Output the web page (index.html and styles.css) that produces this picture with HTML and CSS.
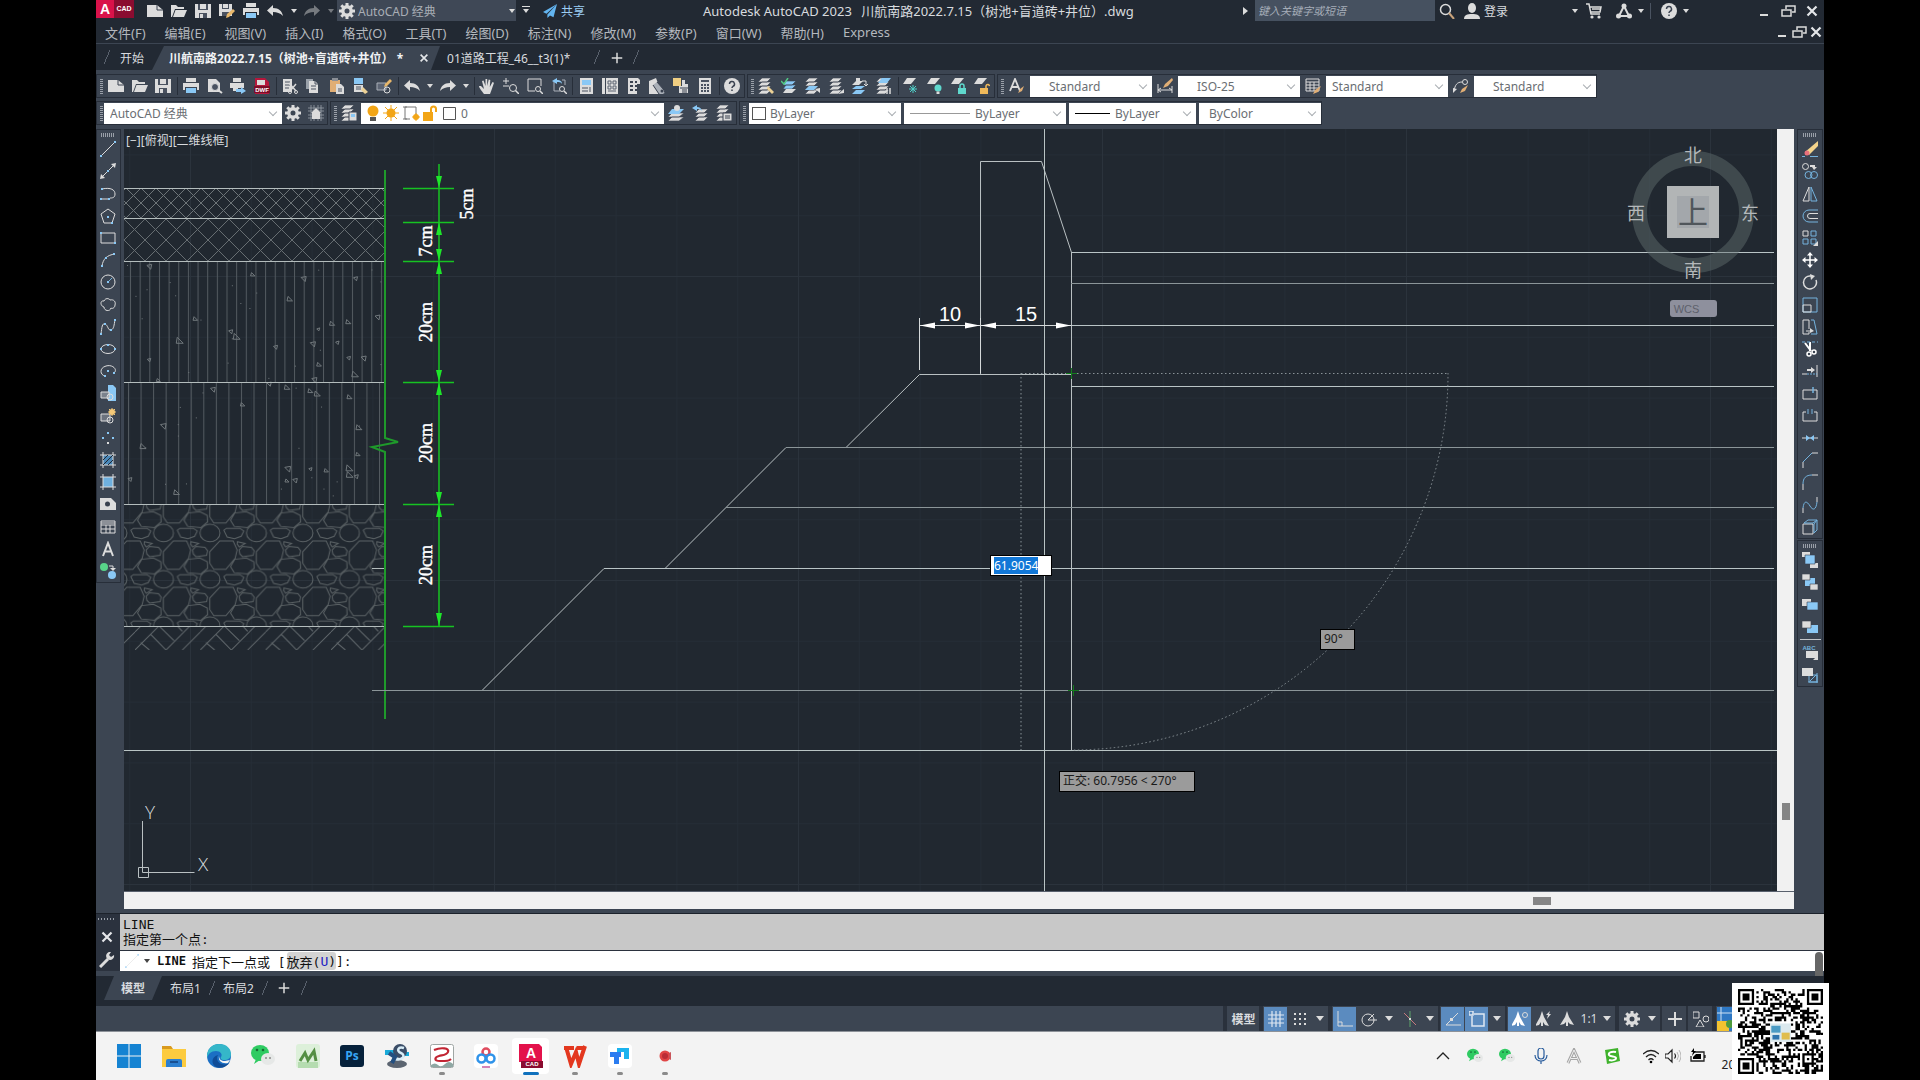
FILE: index.html
```html
<!DOCTYPE html>
<html lang="zh-CN">
<head>
  <meta charset="UTF-8" />
  <meta name="viewport" content="width=device-width, initial-scale=1" />
  <title>Autodesk AutoCAD 2023</title>
  <link rel="stylesheet" href="styles.css">
</head>
<body>
  <!-- icon sprite -->
  <svg class="sprite" width="0" height="0">
    <symbol id="new" viewBox="0 0 16 16"><path class="w" d="M0 2h10l6 5v7H0z"/><path d="M10 2v5h6" fill="none" stroke="#39414f"/></symbol>
    <symbol id="open" viewBox="0 0 16 16"><path class="w" d="M0 2h5l2 2h6v2H4L1 14H0z"/><path class="w" d="M4.500 7H16l-3 7H2z"/></symbol>
    <symbol id="save" viewBox="0 0 16 16"><path class="w" d="M0 1h16v14H0z"/><path d="M3 1h10v6H3zM4 10h8v5H4z" fill="#4a5260"/><path class="w" d="M5 1h6v5H5zM5 11h3v4H5z"/></symbol>
    <symbol id="saveas" viewBox="0 0 16 16"><path class="w" d="M0 1h13v12H0z"/><path d="M3 1h7v5H3zM3 9h7v4H3z" fill="#4a5260"/><path class="w" d="M4 1h5v4H4z"/><path d="M7 15l1-4 6-5 2 2-6 6z" fill="#e8b76a"/></symbol>
    <symbol id="print" viewBox="0 0 16 16"><path class="w" d="M3 0h10v4H3zM0 5h16v7h-2V9H2v3H0z"/><path class="b" d="M3 10h10v5H3z"/></symbol>
    <symbol id="preview" viewBox="0 0 16 16"><path class="w" d="M1 1h8l4 4v9H1z"/><circle cx="8" cy="9" r="3.500" fill="#4a5260" stroke="#dcdcdc"/><path class="lw" d="M11 12l4 3" stroke-width="2"/></symbol>
    <symbol id="publish" viewBox="0 0 16 16"><path class="w" d="M3 0h8v4H3zM0 5h14v5H0zM3 10h5v3H3z"/><path class="b" d="M6 11h5V9l5 4-5 3v-2H6z"/></symbol>
    <symbol id="cut" viewBox="0 0 16 16"><path class="w" d="M1 1h9v13H1z"/><path d="M3 4h5M3 7h5M3 10h4" stroke="#4a5260"/><path class="lw" d="M7 5l7 8M14 6l-6 7" stroke-width="1.500"/><circle class="lw" cx="14" cy="14" r="1.500"/><circle class="lw" cx="8" cy="14" r="1.500"/></symbol>
    <symbol id="copy" viewBox="0 0 16 16"><path d="M1 1h7v10H1z" fill="#9aa1aa"/><path class="w" d="M4 3h6l3 3v9H4z"/><path d="M10 3v3h3M6 8h5M6 11h5" fill="none" stroke="#4a5260"/></symbol>
    <symbol id="paste" viewBox="0 0 16 16"><path d="M1 2h10v12H1z" fill="#e0ae75"/><path d="M3 0h6v3H3z" fill="#8b8f96"/><path class="w" d="M7 6h5l3 3v7H7z"/><path d="M9 11h4M9 13h4" stroke="#4a5260"/></symbol>
    <symbol id="match" viewBox="0 0 16 16"><path class="b" d="M1 0h9v6H1z"/><path class="w" d="M1 7h9v7H1z"/><path d="M3 9h5M3 11h5" stroke="#4a5260"/><path d="M10 9l5 5-3 2-4-4z" fill="#ecd196"/></symbol>
    <symbol id="bedit" viewBox="0 0 16 16"><path d="M1 5h9v7H1z" fill="#5d6574" stroke="#aab0b8"/><circle class="lw" cx="11" cy="12" r="3"/><path d="M8 9l1-3 5-5 2 2-5 5z" fill="#e8b76a"/></symbol>
    <symbol id="undo" viewBox="0 0 16 16"><path class="w" d="M6 2v3c6 0 9 3 10 8-3-3-6-4-10-4v4L0 7.500z"/></symbol>
    <symbol id="redo" viewBox="0 0 16 16"><path class="w" d="M10 2v3C4 5 1 8 0 13c3-3 6-4 10-4v4l6-5.500z"/></symbol>
    <symbol id="pan" viewBox="0 0 16 16"><path class="w" d="M5 16C3 13 0 10 0 8l2 0 3 3L3 3l1.500-.500L6.500 8V1h1.700v7l1.500-6.500 1.600.400L10.800 9l2.700-5 1.500.700L12.500 12 11 16z"/></symbol>
    <symbol id="zoomrt" viewBox="0 0 16 16"><path class="lw" d="M3 0v6M0 3h6M0 8h6"/><circle class="lw" cx="10" cy="10" r="3.500"/><path class="lw" d="M12.500 12.500L16 16" stroke-width="1.500"/></symbol>
    <symbol id="zoomwin" viewBox="0 0 16 16"><path class="lw" d="M8 13H1V1h13v7"/><circle class="lw" cx="11" cy="11" r="2.500"/><path class="lw" d="M13 13l3 3" stroke-width="1.500"/></symbol>
    <symbol id="zoomprev" viewBox="0 0 16 16"><path d="M3 4v9h6M11 2h3v5" fill="none" stroke="#aab0b8"/><path class="b" d="M1 3l5-3v2c3 0 5 1 5 4-1-2-3-2-5-2v2z"/><circle class="lw" cx="11" cy="11" r="2.500"/><path class="lw" d="M13 13l3 3" stroke-width="1.500"/></symbol>
    <symbol id="props" viewBox="0 0 16 16"><path class="w" d="M2 0h13v16H2z"/><path class="b" d="M4 2h9v5H4z"/><path d="M4 10h6M4 13h6M12 9v5" stroke="#4a5260"/></symbol>
    <symbol id="center" viewBox="0 0 16 16"><path class="w" d="M0 0h3v16H0zM4 0h12v16H4z"/><path d="M6 3h3v3H6zM11 3h3v3h-3zM6 8h3v3H6zM11 8h3v3h-3zM6 13h8" fill="none" stroke="#5a6270"/></symbol>
    <symbol id="palette" viewBox="0 0 16 16"><path class="w" d="M2 0h10l2 2v4h-3v10H2z"/><path d="M4 4h3M4 8h3M4 12h3M9 4h2M9 8h2M9 12h2" stroke="#39414f" stroke-width="2"/></symbol>
    <symbol id="sheet" viewBox="0 0 16 16"><path class="w" d="M0 3l7-3 4 11 3 5H0z"/><path d="M8 4l7 8a3 3 0 0 1-5 4L4 7" fill="#aab0b8" stroke="#39414f"/><circle cx="13" cy="13" r="1.500" fill="#39414f"/></symbol>
    <symbol id="markup" viewBox="0 0 16 16"><path d="M0 0h8v8H0z" fill="#f0cf82"/><path class="w" d="M9 2h3v4h3v9H6V8h3z"/><path d="M7 10h8M9 12h5M9 14h5" stroke="#39414f"/></symbol>
    <symbol id="calc" viewBox="0 0 16 16"><path class="w" d="M2 0h12v16H2z"/><path d="M4 3h8" stroke="#4a5260" stroke-width="2"/><path d="M4 7h2M7 7h2M10 7h2M4 10h2M7 10h2M10 10h2M4 13h2M7 13h2M10 13h2" stroke="#4a5260" stroke-width="2"/></symbol>
    <symbol id="help" viewBox="0 0 16 16"><circle class="w" cx="8" cy="8" r="8"/><path d="M5.500 6a2.500 2.500 0 1 1 3.500 2.300c-.700.400-1 .800-1 1.700M8 11.500v1.500" fill="none" stroke="#39414f" stroke-width="1.500"/></symbol>

    <symbol id="stack" viewBox="0 0 16 16"><path d="M4 0h9L9 4H0zM4 4h9L9 8H0zM4 8h9l-4 4H0zM4 12h9l-4 4H0z" class="w" stroke="#39414f" stroke-width=".6"/></symbol>
    <symbol id="lay-prop" viewBox="0 0 16 16"><use href="#stack"/><path d="M10 8l6 6-2 2-5-5z" fill="#ecd196"/></symbol>
    <symbol id="lay-list" viewBox="0 0 16 16"><use href="#stack"/><path class="w" d="M8 7h8v9H8z" stroke="#39414f"/><path class="b" d="M10 9h4v3h-4z"/></symbol>
    <symbol id="lay-cur" viewBox="0 0 16 16"><path class="b" d="M5 3h10l-4 4H2zM5 7h10l-4 4H2z" stroke="#39414f" stroke-width=".6"/><path class="w" d="M5 11h10l-4 4H2z"/><path d="M0 3l3 3 4-6" fill="none" stroke="#52c985" stroke-width="1.500"/></symbol>
    <symbol id="lay-iso" viewBox="0 0 16 16"><use href="#stack"/><path class="b" d="M4 8h9l-4 4H0z"/><path class="w" d="M10 11l5-1v5z"/></symbol>
    <symbol id="lay-uniso" viewBox="0 0 16 16"><use href="#stack"/><path class="w" d="M9 16l6-5v4z"/></symbol>
    <symbol id="lay-walk" viewBox="0 0 16 16"><path class="w" d="M4 0h4v3h3l-4 4H0l4-4z"/><path class="b" d="M4 8h9l-4 3H0zM4 12h9l-4 4H0z"/><path class="lw" d="M10 3h4v4M12 6l2 2 2-2"/></symbol>
    <symbol id="lay-match" viewBox="0 0 16 16"><use href="#stack"/><path class="b" d="M6 0h9l-4 5H2z"/><path class="lw" d="M11 10v6M14 10v6" stroke-width="1.500"/></symbol>
    <symbol id="lay-freeze" viewBox="0 0 16 16"><path class="w" d="M4 0h9L8 6H0z"/><path d="M10 7v8M6 11h8M7 8l6 6M13 8l-6 6" stroke="#4fd0c8"/></symbol>
    <symbol id="lay-off" viewBox="0 0 16 16"><path class="w" d="M4 0h9L8 6H0z"/><circle cx="11" cy="10" r="3.500" fill="#5fd8cd"/><path class="w" d="M9.500 13.500h3V16h-3z"/></symbol>
    <symbol id="lay-lock" viewBox="0 0 16 16"><path class="w" d="M4 0h9L8 6H0z"/><path d="M7 10h8v6H7z" fill="#5fd8cd"/><path d="M9 10V8a2 2 0 0 1 4 0v2" fill="none" stroke="#5fd8cd" stroke-width="1.500"/></symbol>
    <symbol id="lay-unlock" viewBox="0 0 16 16"><path class="w" d="M4 0h9L8 6H0z"/><path d="M6 10h8v6H6z" fill="#f0b95a"/><path d="M12 10V8a1.800 1.800 0 0 1 3.500 0" fill="none" stroke="#f0b95a" stroke-width="1.500"/></symbol>
    <symbol id="lay-make" viewBox="0 0 16 16"><path class="w" d="M4 8h12l-5 4H0zM4 12h12l-5 4H0z" stroke="#39414f" stroke-width=".6"/><path class="b" d="M4 4h12l-5 5H0z"/><circle class="w" cx="9" cy="3" r="3"/></symbol>
    <symbol id="lay-prev" viewBox="0 0 16 16"><path class="w" d="M7 4h9l-4 4H3zM7 8h9l-4 4H3zM7 12h9l-4 4H3z" stroke="#39414f" stroke-width=".6"/><path class="b" d="M0 3l5-3v2c3 0 4 1 5 4-2-2-3-2-5-2v2z"/></symbol>
    <symbol id="lay-state" viewBox="0 0 16 16"><use href="#stack"/><path class="w" d="M7 8h9v8H7z" stroke="#39414f"/><path d="M9 11h5M9 13h5" stroke="#39414f"/></symbol>

    <symbol id="textstyle" viewBox="0 0 16 16"><path class="lw" d="M1 13L6 1l5 12M3 9h6" stroke-width="1.800"/><path d="M9 15l2-4 4-3-2 5z" fill="#e0ae75"/></symbol>
    <symbol id="dimstyle" viewBox="0 0 16 16"><path class="lw" d="M1 6v9M15 8v7M1 12h14M1 12l3-2M1 12l3 2M15 12l-3-2"/><path d="M6 10l2-4 7-6 1 2-5 6z" fill="#e0ae75"/></symbol>
    <symbol id="tabstyle" viewBox="0 0 16 16"><path class="lw" d="M1 1h13v12H1zM1 4h13M1 7h13M1 10h13M5 4v9M9 4v9"/><path d="M8 16l2-4 6-4-3 6z" fill="#e0ae75"/></symbol>
    <symbol id="leadstyle" viewBox="0 0 16 16"><path class="lw" d="M1 13C2 7 4 4 9 4"/><circle class="lw" cx="12" cy="4" r="2.500"/><path class="w" d="M0 10l4 1-4 4z"/><path d="M7 15l2-4 6-4-3 6z" fill="#e0ae75"/></symbol>
    <symbol id="gear" viewBox="0 0 16 16"><circle cx="8" cy="8" r="4.200" fill="none" stroke="#dcdcdc" stroke-width="3.400"/><path d="M8 0v3M8 13v3M0 8h3M13 8h3M2.300 2.300l2.200 2.200M11.500 11.500l2.200 2.200M13.700 2.300l-2.200 2.200M4.500 11.500l-2.200 2.200" stroke="#dcdcdc" stroke-width="3"/></symbol>
    <symbol id="home" viewBox="0 0 16 16"><path d="M0 3h16M0 13h16M3 0v16M13 0v16M0 6h16M0 10h16M6 0v16M10 0v16" stroke="#9aa1aa" stroke-width=".8"/><path class="w" d="M3 8l5-5 5 5h-1v6H4V8z"/></symbol>
    <symbol id="plane" viewBox="0 0 16 16"><path d="M16 0L0 9l4 2zM16 0L5 12v4l3-3 4 2z" fill="#63b5f1"/></symbol>
    <symbol id="search" viewBox="0 0 16 16"><circle class="lw" cx="6.500" cy="6.500" r="5" stroke-width="1.500"/><path d="M10 10l5 6" stroke="#c9a27a" stroke-width="2"/></symbol>
    <symbol id="user" viewBox="0 0 16 16"><ellipse class="w" cx="8" cy="5" rx="4" ry="5"/><path class="w" d="M0 16c0-4 3-5 8-5s8 1 8 5z"/></symbol>
    <symbol id="cart" viewBox="0 0 16 16"><path class="lw" d="M0 1h3l2 10h9M4 4h11l-1 5H5M6 6h8" stroke-width="1.500"/><circle class="w" cx="6" cy="14" r="1.600"/><circle class="w" cx="13" cy="14" r="1.600"/></symbol>
    <symbol id="adsk" viewBox="0 0 16 16"><path d="M8 3L3 13h10z" fill="none" stroke="#dcdcdc" stroke-width="2"/><circle class="w" cx="8" cy="3" r="2.500"/><circle class="w" cx="2.500" cy="13" r="2.500"/><circle class="w" cx="13.500" cy="13" r="2.500"/></symbol>
    <symbol id="min" viewBox="0 0 16 16"><path d="M4 12h8" stroke="#dcdcdc" stroke-width="2"/></symbol>
    <symbol id="restore" viewBox="0 0 16 16"><path class="lw" d="M6 6V3h9v6h-3M2 7h9v6H2z" stroke-width="1.500"/></symbol>
    <symbol id="close" viewBox="0 0 16 16"><path d="M3.500 3.500l9 9M12.500 3.500l-9 9" stroke="#e4e6e9" stroke-width="2.200"/></symbol>

    <symbol id="d-line" viewBox="0 0 16 16"><path class="lw" d="M1 15L15 1"/><path class="b" d="M0 14h2v2H0zM14 0h2v2h-2z"/></symbol>
    <symbol id="d-xline" viewBox="0 0 16 16"><path class="lw" d="M2 14L14 2"/><path class="w" d="M0 16l1-5 4 4zM16 0l-1 5-4-4z"/><path class="b" d="M7 7h2v2H7z"/></symbol>
    <symbol id="d-pline" viewBox="0 0 16 16"><path class="lw" d="M2 3c9-2 13 1 13 5s-3 4-5 4M1 13h8"/><path class="b" d="M1 2h2v2H1zM0 12h2v2H0zM8 12h2v2H8z"/></symbol>
    <symbol id="d-poly" viewBox="0 0 16 16"><path class="lw" d="M8 1l7 5-3 9H4L1 6z"/><path class="b" d="M7 8h2v2H7zM11 14h2v2h-2z"/></symbol>
    <symbol id="d-rect" viewBox="0 0 16 16"><path class="lw" d="M1 3h14v10H1z"/><path class="b" d="M0 2h2v2H0zM14 12h2v2h-2z"/></symbol>
    <symbol id="d-arc" viewBox="0 0 16 16"><path class="lw" d="M2 14C3 7 7 3 15 2"/><path class="b" d="M1 13h2v2H1zM5 5h2v2H5zM13 1h2v2h-2z"/></symbol>
    <symbol id="d-circle" viewBox="0 0 16 16"><circle class="lw" cx="8" cy="8" r="7"/><path class="lb" d="M8 8l4-4"/><path class="b" d="M7 7h2v2H7z"/></symbol>
    <symbol id="d-cloud" viewBox="0 0 16 16"><path class="lw" d="M4 10C0 9 0 3 4 4c1-3 5-3 6-1 4-1 6 2 5 5 0 3-3 4-4 3-1 4-7 3-7-1z"/></symbol>
    <symbol id="d-spline" viewBox="0 0 16 16"><path class="lw" d="M1 15C2 8 2 4 5 5s3 7 6 6 3-5 4-10"/><path class="b" d="M0 14h2v2H0zM4 4h2v2H4zM10 10h2v2h-2zM14 0h2v2h-2z"/></symbol>
    <symbol id="d-ellipse" viewBox="0 0 16 16"><ellipse class="lw" cx="8" cy="8" rx="7" ry="4.500"/><path class="b" d="M0 7h2v2H0zM14 7h2v2h-2zM7 3h2v2H7z"/></symbol>
    <symbol id="d-ellarc" viewBox="0 0 16 16"><path class="lw" d="M5 13C0 12-1 5 6 3s12 4 8 7"/><path class="b" d="M7 7h2v2H7zM13 9h2v2h-2zM4 12h2v2H4z"/></symbol>
    <symbol id="d-insert" viewBox="0 0 16 16"><path class="b" d="M8 0h5l3 3v13H8z"/><path d="M1 7h8v6H1z" fill="#7b828c" stroke="#dcdcdc"/><circle class="lw" cx="10" cy="12" r="3"/></symbol>
    <symbol id="d-block" viewBox="0 0 16 16"><path d="M1 6h9v7H1z" fill="#6b727e" stroke="#dcdcdc"/><circle class="lw" cx="10" cy="12" r="3"/><circle cx="12" cy="4" r="3" fill="#f3c878"/><path d="M12 0v8M8 4h8M9 1l6 6M15 1L9 7" stroke="#f3c878"/></symbol>
    <symbol id="d-point" viewBox="0 0 16 16"><path class="b" d="M7 2h2v2H7zM2 7h2v2H2zM12 7h2v2h-2z"/><path class="w" d="M7 12h2v2H7z"/></symbol>
    <symbol id="d-hatch" viewBox="0 0 16 16"><path d="M3 3h10v10H3z" fill="#4a87b8"/><path class="lw" d="M0 3h16M0 13h16M3 0v16M13 0v16"/><path d="M3 8l5-5M3 13L13 3M8 13l5-5" stroke="#222933"/></symbol>
    <symbol id="d-grad" viewBox="0 0 16 16"><path d="M3 3h10v10H3z" fill="#6fb0df"/><path class="lw" d="M0 3h16M0 13h16M3 0v16M13 0v16"/></symbol>
    <symbol id="d-region" viewBox="0 0 16 16"><path class="w" d="M0 2h11l5 5v7H0z"/><circle cx="7.500" cy="8" r="2.500" fill="#39414f"/></symbol>
    <symbol id="d-table" viewBox="0 0 16 16"><path class="lw" d="M1 2h14v12H1zM1 6h14M1 10h14M6 6v8M10 6v8"/><path class="lw" d="M1 4h14"/></symbol>
    <symbol id="d-text" viewBox="0 0 16 16"><path class="lw" d="M3 15L8 2l5 13M4.500 10.500h7" stroke-width="2"/></symbol>
    <symbol id="d-add" viewBox="0 0 16 16"><circle cx="4" cy="4" r="4" fill="#58d389"/><circle cx="12" cy="12" r="4" class="b"/><path class="lw" d="M9 3h4v3"/><path class="w" d="M10 5h6l-3 3z"/></symbol>

    <symbol id="m-erase" viewBox="0 0 16 16"><path d="M16 0v5l-9 9-4-3z" fill="#f3d38b"/><circle cx="5" cy="12" r="2.500" fill="#e8707c"/><path class="lb" d="M0 15.500h3M8 15.500h8"/></symbol>
    <symbol id="m-copy" viewBox="0 0 16 16"><circle class="lw" cx="3.500" cy="3.500" r="3"/><circle class="lb" cx="6.500" cy="12" r="3.500"/><circle class="lb" cx="12" cy="12" r="3.500"/><path class="w" d="M8 2h5v2h2l-3 3-2-3H8z"/></symbol>
    <symbol id="m-mirror" viewBox="0 0 16 16"><path class="lw" d="M7 1v14H1z"/><path class="lb" d="M9 1v14h6z"/></symbol>
    <symbol id="m-offset" viewBox="0 0 16 16"><path class="lb" d="M16 2H7a6 6 0 0 0 0 12h9"/><path class="lw" d="M16 5.500H8a2.500 2.500 0 0 0 0 5h8"/></symbol>
    <symbol id="m-array" viewBox="0 0 16 16"><path class="lw" d="M1 1h5v5H1z"/><path class="lb" d="M9 1h5v5H9zM1 9h5v5H1zM9 9h5v5H9z"/><path class="w" d="M16 11v5h-5z"/></symbol>
    <symbol id="m-move" viewBox="0 0 16 16"><path d="M8 2v12M2 8h12" stroke="#fff" stroke-width="1.500"/><path d="M8 0l3 3.500H5zM8 16l3-3.500H5zM0 8l3.500-3v6zM16 8l-3.500-3v6z" fill="#fff"/></symbol>
    <symbol id="m-rotate" viewBox="0 0 16 16"><path class="lw" d="M14 6a6.500 6.500 0 1 1-5-4" stroke-width="1.500"/><path class="w" d="M8 0l5 2-4 4z"/></symbol>
    <symbol id="m-scale" viewBox="0 0 16 16"><path class="lb" d="M1 1h14v14H1z"/><path class="lw" d="M1 8h8v7H1z"/></symbol>
    <symbol id="m-stretch" viewBox="0 0 16 16"><path class="lw" d="M7 10V1H1v14h6v-2M4 12h5"/><path class="w" d="M8 9l4 3-4 2z"/><path class="lb" d="M9 1h3l3 14H9"/></symbol>
    <symbol id="m-trim" viewBox="0 0 16 16"><path d="M3 2l6 8M8 1v9" stroke="#fff" stroke-width="2"/><path class="lb" d="M0 1h16" stroke-dasharray="3 2"/><circle cx="7" cy="13" r="2" fill="none" stroke="#fff" stroke-width="1.500"/><circle cx="12" cy="11" r="2" fill="none" stroke="#fff" stroke-width="1.500"/></symbol>
    <symbol id="m-extend" viewBox="0 0 16 16"><path class="lw" d="M15 2v12M0 11h5"/><path class="lb" d="M5 11h10" stroke-dasharray="2 1"/><path class="w" d="M5 6h4V4l4 3-4 3V8H5z"/></symbol>
    <symbol id="m-breakpt" viewBox="0 0 16 16"><path class="lw" d="M1 4h14v9H1z"/><path class="lb" d="M11 1v6" stroke-width="1.500"/></symbol>
    <symbol id="m-break" viewBox="0 0 16 16"><path class="lw" d="M4 4H1v9h14V4h-3"/><path class="lb" d="M6 1v5M10 1v5"/></symbol>
    <symbol id="m-join" viewBox="0 0 16 16"><path class="lw" d="M0 8h16"/><path class="b" d="M4 5l4 3-4 3zM12 5L8 8l4 3z"/></symbol>
    <symbol id="m-chamfer" viewBox="0 0 16 16"><path class="lw" d="M1 16v-6M10 1h6"/><path class="lb" d="M1 10l9-9"/></symbol>
    <symbol id="m-fillet" viewBox="0 0 16 16"><path class="lw" d="M1 16v-6M10 1h6"/><path class="lb" d="M1 10C1 4 4 1 10 1"/></symbol>
    <symbol id="m-blend" viewBox="0 0 16 16"><path class="lw" d="M1 16v-5M15 5V0"/><path class="lb" d="M1 11C2 3 5 4 8 9s6 4 7-4"/></symbol>
    <symbol id="m-explode" viewBox="0 0 16 16"><path class="lw" d="M1 5h10v10H1z"/><path class="lb" d="M2 4l4-3h9l-4 3zM12 5l3-4v10l-3 3z"/></symbol>
    <symbol id="o-front" viewBox="0 0 16 16"><path class="w" d="M0 0h8v5H0zM8 11h8v5H8z"/><path class="b" d="M3 3h10v9H3z" stroke="#39414f" stroke-width=".6"/></symbol>
    <symbol id="o-back" viewBox="0 0 16 16"><path class="b" d="M3 4h10v8H3z"/><path class="w" d="M0 0h8v6H0zM8 10h8v6H8z" stroke="#39414f" stroke-width=".6"/></symbol>
    <symbol id="o-above" viewBox="0 0 16 16"><path class="w" d="M0 2h9v7H0z"/><path class="b" d="M5 5h11v8H5z" stroke="#39414f" stroke-width=".6"/></symbol>
    <symbol id="o-under" viewBox="0 0 16 16"><path class="b" d="M5 6h11v8H5z"/><path class="w" d="M0 2h9v7H0z" stroke="#39414f" stroke-width=".6"/></symbol>
    <symbol id="o-hatch" viewBox="0 0 16 16"><path class="lb" d="M7 8h8v7H7zM8 14l6-6M6 15h10M15 6v10"/><path class="w" d="M0 1h11v8H0z"/></symbol>

    <symbol id="s-grid" viewBox="0 0 16 16"><path d="M4 0v16M8 0v16M12 0v16M0 4h16M0 8h16M0 12h16" stroke="#dfe8f2" stroke-width="1.200"/></symbol>
    <symbol id="s-snap" viewBox="0 0 16 16"><path d="M2 3h12M2 8h12M2 13h12" stroke="#dcdcdc" stroke-width="2" stroke-dasharray="2 3"/></symbol>
    <symbol id="s-ortho" viewBox="0 0 16 16"><path class="lw" d="M1 0v15h15M1 11h4v4"/></symbol>
    <symbol id="s-polar" viewBox="0 0 16 16"><circle class="lw" cx="7" cy="9" r="6"/><path class="lw" d="M7 9h9M7 9l6-6"/></symbol>
    <symbol id="s-iso" viewBox="0 0 16 16"><path d="M8 0v16" stroke="#5ca46a"/><path d="M2 2l12 12" stroke="#c67a7e"/><path class="w" d="M7 7h2v2H7z"/></symbol>
    <symbol id="s-track" viewBox="0 0 16 16"><path class="lw" d="M1 14h15M1 14L13 2"/><path class="w" d="M5 7h3v3H5z"/></symbol>
    <symbol id="s-osnap" viewBox="0 0 16 16"><path d="M5 3h10v12H3V5" fill="none" stroke="#dfe8f2" stroke-width="1.500"/><path d="M0 0h4v4H0z" fill="none" stroke="#dfe8f2" stroke-width="1.500"/></symbol>
    <symbol id="s-anno" viewBox="0 0 16 16"><path d="M7 0l2 6 5 8-4-1-2-2v4H6v-4l-2 2-4 1 5-8z" class="w"/></symbol>
    <symbol id="s-annovis" viewBox="0 0 16 16"><path d="M6 0l2 6 5 9-4-1-2-3v4H5v-4l-2 3-4 1 5-9z" fill="#fff"/><circle class="lw" cx="13" cy="4" r="2.500"/></symbol>
    <symbol id="s-annoauto" viewBox="0 0 16 16"><path d="M6 0l2 6 5 9-4-1-2-3v4H5v-4l-2 3-4 1 5-9z" class="w"/><path d="M14 0l-4 4h2l-1 4 4-5h-2z" class="w"/></symbol>
    <symbol id="s-custom" viewBox="0 0 16 16"><path class="lw" d="M0 1h6v6H0zM7 9l4 7H3z"/><circle class="lw" cx="13" cy="8" r="3"/></symbol>
    <symbol id="plus" viewBox="0 0 16 16"><path d="M8 1v14M1 8h14" stroke="#dcdcdc" stroke-width="2"/></symbol>
    <symbol id="wrench" viewBox="0 0 16 16"><path d="M1 15l8-8" stroke="#dcdcdc" stroke-width="3"/><path d="M15 3a4 4 0 1 1-3-3l-2 3 2 2z" class="w"/></symbol>

    <symbol id="wechat" viewBox="0 0 24 24"><ellipse cx="9" cy="9" rx="9" ry="8" fill="#2fcb62"/><path d="M3 20l2-5 4 1z" fill="#2fcb62"/><ellipse cx="17" cy="15" rx="7" ry="6" fill="#e6e8e7"/><circle cx="6" cy="6" r="1.300" fill="#176b36"/><circle cx="12" cy="6" r="1.300" fill="#176b36"/><circle cx="15" cy="14" r="1" fill="#8a8a8a"/><circle cx="19" cy="14" r="1" fill="#8a8a8a"/></symbol>
  </svg>

  <div class="window">
    <header class="titlebar">
      <span class="logo"><b>A</b><i>CAD</i></span>
      <div class="quick">
        <button title="新建"><svg><use href="#new"/></svg></button>
        <button title="打开"><svg><use href="#open"/></svg></button>
        <button title="保存"><svg><use href="#save"/></svg></button>
        <button title="另存为"><svg><use href="#saveas"/></svg></button>
        <button title="打印"><svg><use href="#print"/></svg></button>
        <button title="放弃"><svg><use href="#undo"/></svg></button>
        <span class="caret"></span>
        <button class="dim" title="重做"><svg><use href="#redo"/></svg></button>
        <span class="caret dim"></span>
      </div>
      <button class="workspace"><svg><use href="#gear"/></svg>AutoCAD 经典<span class="caret"></span></button>
      <span class="caret lined"></span>
      <a class="share" href="#"><svg><use href="#plane"/></svg>共享</a>
      <h1>Autodesk AutoCAD 2023 <span>川航南路2022.7.15（树池+盲道砖+井位）.dwg</span></h1>
      <div class="account">
        <span class="play"></span>
        <input type="text" placeholder="键入关键字或短语" aria-label="搜索">
        <button title="搜索"><svg><use href="#search"/></svg></button>
        <button class="login"><svg><use href="#user"/></svg>登录<span class="caret"></span></button>
        <button class="cart" title="商店"><svg><use href="#cart"/></svg></button>
        <button class="adsk" title="Autodesk"><svg><use href="#adsk"/></svg><span class="caret"></span></button>
        <button class="helpbtn" title="帮助"><svg><use href="#help"/></svg><span class="caret"></span></button>
      </div>
      <div class="winbtns">
        <button title="最小化"><svg><use href="#min"/></svg></button>
        <button title="还原"><svg><use href="#restore"/></svg></button>
        <button title="关闭"><svg><use href="#close"/></svg></button>
      </div>
    </header>

    <nav class="menubar">
      <a href="#">文件(F)</a><a href="#">编辑(E)</a><a href="#">视图(V)</a><a href="#">插入(I)</a><a href="#">格式(O)</a><a href="#">工具(T)</a><a href="#">绘图(D)</a><a href="#">标注(N)</a><a href="#">修改(M)</a><a href="#">参数(P)</a><a href="#">窗口(W)</a><a href="#">帮助(H)</a><a href="#">Express</a>
      <div class="winbtns small">
        <button title="最小化"><svg><use href="#min"/></svg></button>
        <button title="还原"><svg><use href="#restore"/></svg></button>
        <button title="关闭"><svg><use href="#close"/></svg></button>
      </div>
    </nav>

    <div class="filetabs">
      <span class="slash"></span>
      <button class="tab">开始</button>
      <button class="tab active">川航南路2022.7.15（树池+盲道砖+井位）&nbsp;*<svg><use href="#close"/></svg></button>
      <button class="tab second">01道路工程_46__t3(1)*</button>
      <span class="slash"></span>
      <button class="add" title="新图形"><svg><use href="#plus"/></svg></button>
      <span class="slash"></span>
    </div>

    <div class="toolrow">
      <div class="panel standard">
        <span class="grip"></span>
        <button title="新建"><svg><use href="#new"/></svg></button>
        <button title="打开"><svg><use href="#open"/></svg></button>
        <button title="保存"><svg><use href="#save"/></svg></button>
        <span class="sep"></span>
        <button title="打印"><svg><use href="#print"/></svg></button>
        <button title="打印预览"><svg><use href="#preview"/></svg></button>
        <button title="发布"><svg><use href="#publish"/></svg></button>
        <button title="DWF"><svg viewBox="0 0 16 16"><path d="M1 0h10l4 4v12H1z" fill="#b5173c"/><path class="w" d="M3 2h8v5H3z"/><path d="M0 8h16v7H0z" fill="#7c0d28"/><text x="8" y="14" class="tiny">DWF</text></svg></button>
        <span class="sep"></span>
        <button title="剪切"><svg><use href="#cut"/></svg></button>
        <button title="复制"><svg><use href="#copy"/></svg></button>
        <button title="粘贴"><svg><use href="#paste"/></svg></button>
        <button title="特性匹配"><svg><use href="#match"/></svg></button>
        <button title="块编辑器"><svg><use href="#bedit"/></svg></button>
        <span class="sep"></span>
        <button title="放弃"><svg><use href="#undo"/></svg></button>
        <span class="caret"></span>
        <button title="重做"><svg><use href="#redo"/></svg></button>
        <span class="caret"></span>
        <span class="sep"></span>
        <button title="平移"><svg><use href="#pan"/></svg></button>
        <button title="实时缩放"><svg><use href="#zoomrt"/></svg></button>
        <button title="窗口缩放"><svg><use href="#zoomwin"/></svg></button>
        <button title="缩放上一个"><svg><use href="#zoomprev"/></svg></button>
        <span class="sep"></span>
        <button title="特性"><svg><use href="#props"/></svg></button>
        <button title="设计中心"><svg><use href="#center"/></svg></button>
        <button title="工具选项板"><svg><use href="#palette"/></svg></button>
        <button title="图纸集"><svg><use href="#sheet"/></svg></button>
        <button title="标记集"><svg><use href="#markup"/></svg></button>
        <button title="计算器"><svg><use href="#calc"/></svg></button>
        <span class="sep"></span>
        <button title="帮助"><svg><use href="#help"/></svg></button>
      </div>
      <div class="panel layers2">
        <span class="grip"></span>
        <button title="图层特性"><svg><use href="#lay-prop"/></svg></button>
        <button title="置为当前"><svg><use href="#lay-cur"/></svg></button>
        <button title="隔离"><svg><use href="#lay-iso"/></svg></button>
        <button title="取消隔离"><svg><use href="#lay-uniso"/></svg></button>
        <button title="图层漫游"><svg><use href="#lay-walk"/></svg></button>
        <button title="图层匹配"><svg><use href="#lay-match"/></svg></button>
        <span class="sep"></span>
        <button title="冻结"><svg><use href="#lay-freeze"/></svg></button>
        <button title="关闭图层"><svg><use href="#lay-off"/></svg></button>
        <button title="锁定"><svg><use href="#lay-lock"/></svg></button>
        <button title="解锁"><svg><use href="#lay-unlock"/></svg></button>
      </div>
      <div class="panel styles">
        <span class="grip"></span>
        <button title="文字样式"><svg><use href="#textstyle"/></svg></button>
        <span class="combo"><select class="inset" aria-label="文字样式"><option>Standard</option></select></span>
        <button title="标注样式"><svg><use href="#dimstyle"/></svg></button>
        <span class="combo"><select class="inset" aria-label="标注样式"><option>ISO-25</option></select></span>
        <button title="表格样式"><svg><use href="#tabstyle"/></svg></button>
        <span class="combo"><select aria-label="表格样式"><option>Standard</option></select></span>
        <button title="引线样式"><svg><use href="#leadstyle"/></svg></button>
        <span class="combo"><select class="inset" aria-label="引线样式"><option>Standard</option></select></span>
      </div>
    </div>

    <div class="toolrow second">
      <div class="panel ws">
        <span class="grip"></span>
        <span class="combo"><select aria-label="工作空间"><option>AutoCAD 经典</option></select></span>
        <button title="工作空间设置"><svg><use href="#gear"/></svg></button>
        <button title="我的工作空间"><svg><use href="#home"/></svg></button>
      </div>
      <div class="panel layer">
        <span class="grip"></span>
        <button title="图层特性管理器"><svg><use href="#lay-list"/></svg></button>
        <span class="combo">
          <select aria-label="图层"><option>0</option></select>
          <svg class="layerstate" width="90" height="16">
            <circle cx="7" cy="6" r="5.500" fill="#f2a516"/><path d="M4 12h6v4H4z" fill="#555"/>
            <circle cx="25" cy="8" r="4.500" fill="#f2a516"/><path d="M25 0v16M17 8h16M19 2l12 12M31 2L19 14" stroke="#f2a516"/>
            <path d="M39 2h11v9M39 2v12h5M37 2h4M37 14h4" fill="none" stroke="#777"/><circle cx="50" cy="12" r="3" fill="#f2a516"/><path d="M50 8v8M46 12h8" stroke="#f2a516"/>
            <path d="M57 7h10v9H57z" fill="#f2a516"/><path d="M65 7V4a2.500 2.500 0 0 1 5 0v3" fill="none" stroke="#f2a516" stroke-width="2"/>
            <path d="M77.500 2.500h12v12h-12z" fill="#fff" stroke="#555"/>
          </svg>
        </span>
        <button title="置为当前"><svg><use href="#lay-make"/></svg></button>
        <button title="上一个图层"><svg><use href="#lay-prev"/></svg></button>
        <button title="图层状态"><svg><use href="#lay-state"/></svg></button>
      </div>
      <div class="panel props">
        <span class="grip"></span>
        <span class="combo color"><select aria-label="颜色"><option>ByLayer</option></select><i class="swatch"></i></span>
        <span class="combo ltype"><select aria-label="线型"><option>ByLayer</option></select><i class="sample"></i></span>
        <span class="combo lweight"><select aria-label="线宽"><option>ByLayer</option></select><i class="sample"></i></span>
        <span class="combo plot"><select aria-label="打印样式"><option>ByColor</option></select></span>
      </div>
    </div>

    <main class="work">
      <aside class="side left">
        <div class="palette draw">
          <span class="grip"></span>
          <button title="直线"><svg><use href="#d-line"/></svg></button>
          <button title="构造线"><svg><use href="#d-xline"/></svg></button>
          <button title="多段线"><svg><use href="#d-pline"/></svg></button>
          <button title="多边形"><svg><use href="#d-poly"/></svg></button>
          <button title="矩形"><svg><use href="#d-rect"/></svg></button>
          <button title="圆弧"><svg><use href="#d-arc"/></svg></button>
          <button title="圆"><svg><use href="#d-circle"/></svg></button>
          <button title="修订云线"><svg><use href="#d-cloud"/></svg></button>
          <button title="样条曲线"><svg><use href="#d-spline"/></svg></button>
          <button title="椭圆"><svg><use href="#d-ellipse"/></svg></button>
          <button title="椭圆弧"><svg><use href="#d-ellarc"/></svg></button>
          <button title="插入块"><svg><use href="#d-insert"/></svg></button>
          <button title="创建块"><svg><use href="#d-block"/></svg></button>
          <button title="点"><svg><use href="#d-point"/></svg></button>
          <button title="图案填充"><svg><use href="#d-hatch"/></svg></button>
          <button title="渐变色"><svg><use href="#d-grad"/></svg></button>
          <button title="面域"><svg><use href="#d-region"/></svg></button>
          <button title="表格"><svg><use href="#d-table"/></svg></button>
          <button title="多行文字"><svg><use href="#d-text"/></svg></button>
          <button title="添加选定对象"><svg><use href="#d-add"/></svg></button>
        </div>
      </aside>

      <section class="viewport">
        <svg class="drawing">
          <defs>
            <pattern id="minor" width="60.800" height="60.800" x="190" y="276" patternUnits="userSpaceOnUse"><path d="M.5 0v61M0 .5h61" stroke="#252d36" fill="none"/></pattern>
            <pattern id="major" width="304" height="304" x="190" y="276" patternUnits="userSpaceOnUse"><path d="M.5 0v304M0 .5h304" stroke="#2b333c" fill="none"/></pattern>
            <pattern id="cross1" width="15" height="15" x="126" y="188" patternUnits="userSpaceOnUse"><path d="M0 0l15 15M15 0L0 15" stroke="#6d7478" fill="none"/></pattern>
            <pattern id="cross2" width="21" height="21" x="124" y="219" patternUnits="userSpaceOnUse"><path d="M0 0l21 21M21 0L0 21" stroke="#666d71" fill="none"/></pattern>
            <pattern id="bars1" width="9.650" height="20" x="130" y="261" patternUnits="userSpaceOnUse"><path d="M.5 0v20" stroke="#535a60"/></pattern>
            <pattern id="bars2" width="12.550" height="20" x="128" y="382" patternUnits="userSpaceOnUse"><path d="M.5 0v20" stroke="#535a60"/></pattern>
            <pattern id="stones" width="139.500" height="139" x="215" y="300" patternUnits="userSpaceOnUse" patternTransform="translate(90 440) scale(.3333)">
              <g fill="none" stroke="#5b6265" stroke-width="3" transform="translate(-215 -300)">
                <path d="M220 335l30-32h40l12 27-6 25-28 33h-36l-12-18zM303 305l23 5-18 11-6-9zM308 330l10-11 27 3 8 10-3 14-32 4-8-8zM282 380l13-22 35-4 22 11 1 20-20 17-40-4zM262 410l8-6h40l12 8-8 16-20 7-22-5z"/>
                <ellipse cx="220.500" cy="418" rx="30" ry="26"/><ellipse cx="360" cy="418" rx="30" ry="26"/><ellipse cx="220.500" cy="279" rx="30" ry="26"/><ellipse cx="360" cy="279" rx="30" ry="26"/>
              </g>
            </pattern>
            <pattern id="earth" width="196" height="72" x="135" y="558" patternUnits="userSpaceOnUse" patternTransform="translate(90 440) scale(.3333)">
              <path d="M0 72L72 0M17 50l26 22M47 25l46 47M72 0l45 44M93 72L165 0M127 0l15 16M142 72l54-54M0 18L18 0" stroke="#62696d" stroke-width="3" fill="none"/>
            </pattern>
          </defs>
          <g transform="translate(-124 -129)" fill="none">
            <rect x="124" y="129" width="3000" height="2000" fill="url(#minor)"/>
            <rect x="124" y="129" width="3000" height="2000" fill="url(#major)"/>

            <!-- pavement layers -->
            <rect x="124" y="188" width="261" height="30" fill="url(#cross1)"/>
            <rect x="124" y="218" width="261" height="43" fill="url(#cross2)"/>
            <rect x="124" y="261" width="261" height="121" fill="url(#bars1)"/>
            <rect x="124" y="382" width="261" height="122" fill="url(#bars2)"/>
            <rect x="124" y="504" width="261" height="122" fill="url(#stones)"/>
            <rect x="124" y="626" width="261" height="24" fill="url(#earth)"/>
            <path id="aggregate" stroke="#71787c"/>
            <path d="M124 188.500h261M124 218.500h261M124 261.500h261M124 382.500h261M124 504.500h261M124 626.500h261M372 568.500h13" stroke="#b4bdbd"/>

            <!-- break line and depth dimensions -->
            <path d="M385 170v268l13 4-26 5 13 5v267" stroke="#1f9a2b" stroke-width="2"/>
            <path d="M439 164v462M403 188.500h51M403 222.500h51M403 261.500h51M403 382.500h51M403 504.500h51M403 626.500h51" stroke="#17c322" stroke-width="1.500"/>
            <path d="M439 188l-3-12h6zM439 222l-3 13h6zM439 261l-3-12h6zM439 261l-3 13h6zM439 382l-3-12h6zM439 382l-3 13h6zM439 504l-3-12h6zM439 504l-3 13h6zM439 626l-3-13h6z" fill="#1ee62a"/>
            <g class="depth">
              <text transform="translate(473 204) rotate(-90)">5cm</text>
              <text transform="translate(432 241) rotate(-90)">7cm</text>
              <text transform="translate(432 322) rotate(-90)">20cm</text>
              <text transform="translate(432 443) rotate(-90)">20cm</text>
              <text transform="translate(432 565) rotate(-90)">20cm</text>
            </g>

            <!-- kerb and stepped base -->
            <path d="M980.500 374V161.500h61l30 91V750M919.500 374.500H1072M919.500 374.500L846 447.500M786 447.500L665 568.500M604 568.500L482 690.500" stroke="#b9c0c2"/>
            <path d="M1071 252.500h703M1071 325.500h703M1071 386.500h703M604 568.500h1170" stroke="#b9c4c6"/>
            <path d="M1071 283.500h703M786 447.500h988M726 507.500h1048M372 690.500h1402" stroke="#8b9598"/>
            <path d="M124 750.500h1653M1044.500 129v762" stroke="#b9c4c4"/>
            <path d="M919.500 318v52M980.500 318v55M919.500 325.500h152" stroke="#d5d9da"/>
            <path d="M920 325.500l15-3v6zM980 325.500l-15-3v6zM981 325.500l15-3v6zM1071 325.500l-15-3v6z" fill="#fff"/>
            <text class="dimtext" x="950" y="321">10</text>
            <text class="dimtext" x="1026" y="321">15</text>

            <path d="M1021 373.500h427M1021 373v377M1448 373A376 376 0 0 1 1072 750" stroke="#899297" stroke-dasharray="1.500 2.500"/>
            <path d="M1071.500 368v11M1066 373.500h11M1073.500 685v11M1068 690.500h11" stroke="#127a1c"/>

            <!-- ucs icon -->
            <path d="M142.500 821v51.500h52M138.500 867.500h10v10h-10z" stroke="#b9c0c2"/>
            <text class="ucs" x="150" y="819">Y</text>
            <text class="ucs" x="203" y="871">X</text>
          </g>
        </svg>

        <span class="viewlabel">[−][俯视][二维线框]</span>
        <input class="dyn length" type="text" value="61.9054" aria-label="长度" autofocus>
        <span class="dyn angle">90°</span>
        <span class="dyn tip">正交: 60.7956 &lt; 270°</span>

        <div class="viewcube">
          <span class="n">北</span>
          <span class="s">南</span>
          <span class="west">西</span>
          <span class="e">东</span>
          <button class="top"><span>上</span></button>
          <button class="wcs">WCS</button>
        </div>
      </section>

      <div class="vscroll"><i></i></div>
      <aside class="side right">
        <div class="palette modify">
          <span class="grip"></span>
          <button title="删除"><svg><use href="#m-erase"/></svg></button>
          <button title="复制"><svg><use href="#m-copy"/></svg></button>
          <button title="镜像"><svg><use href="#m-mirror"/></svg></button>
          <button title="偏移"><svg><use href="#m-offset"/></svg></button>
          <button title="阵列"><svg><use href="#m-array"/></svg></button>
          <button title="移动"><svg><use href="#m-move"/></svg></button>
          <button title="旋转"><svg><use href="#m-rotate"/></svg></button>
          <button title="缩放"><svg><use href="#m-scale"/></svg></button>
          <button title="拉伸"><svg><use href="#m-stretch"/></svg></button>
          <button title="修剪"><svg><use href="#m-trim"/></svg></button>
          <button title="延伸"><svg><use href="#m-extend"/></svg></button>
          <button title="打断于点"><svg><use href="#m-breakpt"/></svg></button>
          <button title="打断"><svg><use href="#m-break"/></svg></button>
          <button title="合并"><svg><use href="#m-join"/></svg></button>
          <button title="倒角"><svg><use href="#m-chamfer"/></svg></button>
          <button title="圆角"><svg><use href="#m-fillet"/></svg></button>
          <button title="光顺曲线"><svg><use href="#m-blend"/></svg></button>
          <button title="分解"><svg><use href="#m-explode"/></svg></button>
        </div>
        <div class="palette order">
          <span class="grip"></span>
          <button title="前置"><svg><use href="#o-front"/></svg></button>
          <button title="后置"><svg><use href="#o-back"/></svg></button>
          <button title="置于对象之上"><svg><use href="#o-above"/></svg></button>
          <button title="置于对象之下"><svg><use href="#o-under"/></svg></button>
          <span class="rule"></span>
          <button title="文字前置"><svg viewBox="0 0 16 16"><text x="7" y="6" class="tiny abc">ABC</text><path class="w" d="M4 7h12v7H4zM16 11v5h-5z"/></svg></button>
          <button title="图案填充后置"><svg><use href="#o-hatch"/></svg></button>
        </div>
      </aside>
      <div class="hscroll"><i></i></div>
    </main>

    <section class="command">
      <div class="cmdside">
        <span class="grip"></span>
        <button title="关闭"><svg><use href="#close"/></svg></button>
        <button title="自定义"><svg><use href="#wrench"/></svg></button>
      </div>
      <div class="cmdbody">
        <div class="history"><p>LINE</p><p>指定第一个点:</p></div>
        <div class="prompt"><svg class="cmdicon"><use href="#d-line"/></svg><span class="caret dark"></span><b>LINE</b><span>指定下一点或 [</span><button>放弃(<em>U</em>)</button><span>]:</span><i class="cmdthumb"></i></div>
      </div>
    </section>

    <div class="layouts">
      <button class="tab active">模型</button>
      <button class="tab">布局1</button>
      <span class="slash"></span>
      <button class="tab">布局2</button>
      <span class="slash"></span>
      <button class="add" title="新布局"><svg><use href="#plus"/></svg></button>
      <span class="slash"></span>
    </div>

    <div class="status">
      <div class="blank"></div>
      <div class="group model"><button>模型</button></div>
      <div class="group"><button class="on" title="栅格"><svg><use href="#s-grid"/></svg></button><button title="捕捉"><svg><use href="#s-snap"/></svg></button><span class="caret"></span></div>
      <div class="group"><button class="on" title="正交"><svg><use href="#s-ortho"/></svg></button><button title="极轴"><svg><use href="#s-polar"/></svg></button><span class="caret"></span><button title="等轴测"><svg><use href="#s-iso"/></svg></button><span class="caret"></span></div>
      <div class="group tight"><button class="on" title="追踪"><svg><use href="#s-track"/></svg></button><button class="on" title="对象捕捉"><svg><use href="#s-osnap"/></svg></button><span class="caret"></span></div>
      <div class="group"><button class="on" title="注释可见性"><svg><use href="#s-annovis"/></svg></button><button title="自动缩放"><svg><use href="#s-annoauto"/></svg></button><button title="注释比例"><svg><use href="#s-anno"/></svg></button><button class="ratio">1:1</button><span class="caret"></span></div>
      <div class="group"><button title="切换工作空间"><svg><use href="#gear"/></svg></button><span class="caret"></span></div>
      <div class="group tight"><button title="注释监视器"><svg><use href="#plus"/></svg></button></div>
      <div class="group"><button title="隔离对象"><svg><use href="#s-custom"/></svg></button></div>
      <div class="group hw"><button title="硬件加速"><svg viewBox="0 0 24 24"><path d="M0 0h24v24H0z" fill="#2e78c4"/><path d="M4 0v24M0 6h24" stroke="#cfe2f4"/><path d="M0 14h12v10H0z" fill="#f2c230"/><circle cx="13" cy="17" r="4" fill="#4f9b3d"/></svg></button></div>
    </div>

    <footer class="taskbar">
      <div class="apps">
        <button title="开始"><svg viewBox="0 0 24 24"><path d="M0 0h11.500v11.500H0zM12.500 0H24v11.500H12.500zM0 12.500h11.500V24H0zM12.500 12.500H24V24H12.500z" fill="#1583d2"/></svg></button>
        <button title="文件资源管理器"><svg viewBox="0 0 24 24"><path d="M0 2h9l2 3h13v8H0z" fill="#d99a1e"/><path d="M0 5h24v18H0z" fill="#fccb3f"/><path d="M4 17q0-2 2-2h12q2 0 2 2v6H4z" fill="#2b7fd0"/><path d="M8 18h8" stroke="#174f92" stroke-width="2"/></svg></button>
        <button title="Edge"><svg viewBox="0 0 24 24"><circle cx="12" cy="12" r="12" fill="#1b6fc4"/><path d="M0 11C1 3 7 0 12 0c8 0 12 5 12 10 0 4-3 6-7 6-3 0-4-2-3-3 2-3-1-6-5-6-5 0-8 3-9 7z" fill="#35b7c9"/><path d="M11 11c-2 3-1 8 4 9 3 1 6 0 8-2-3 5-9 7-14 5-5-3-5-10 2-12z" fill="#0f4c97"/><path d="M12 12c0 3 2 5 6 5l5-1-2 3c-6 1-10-2-9-7z" fill="#f3f3f3"/></svg></button>
        <button title="微信"><svg><use href="#wechat"/></svg></button>
        <button title="M"><svg viewBox="0 0 24 24"><rect width="24" height="24" rx="3" fill="#ddf0da"/><path d="M2 18h20v6H2z" fill="#b5dcb0"/><path d="M4 17L9 9l3 7 6-9 2 10" fill="none" stroke="#548f43" stroke-width="3"/></svg></button>
        <button title="Photoshop"><svg viewBox="0 0 24 24"><rect width="24" height="22" y="1" rx="3" fill="#06213b"/><text x="12" y="16" class="ps">Ps</text></svg></button>
        <button title="CASS"><svg viewBox="0 0 24 24"><path d="M0 6h10v5H0zM12 8h12v4H12z" fill="#19a9d8"/><circle cx="15" cy="7" r="7" fill="#3b4d67"/><ellipse cx="12" cy="20" rx="10" ry="4" fill="#5b6470"/><path d="M19 4c-6-2-8 3-3 5s2 8-6 6" fill="none" stroke="#d9edf7" stroke-width="2.500"/><path d="M4 9l6 4-3 6" stroke="#234f80" stroke-width="4" fill="none"/></svg></button>
        <button class="run" title="Z"><svg viewBox="0 0 24 24"><rect x=".5" y=".5" width="23" height="23" rx="2" fill="#fff" stroke="#9fa6a4"/><path d="M4 6c7-3 16-2 14 2-1 3-5 3-9 4s-6 5 1 5 9 0 11-2" fill="none" stroke="#c22533" stroke-width="2.200"/><path d="M1 21q4-3 7 0t7-1 8 0v3H1z" fill="#8fa8a4"/></svg></button>
        <button title="百度网盘"><svg viewBox="0 0 24 24"><rect width="24" height="24" rx="4" fill="#fff"/><g fill="none" stroke-width="2.500"><circle cx="12" cy="8" r="3.500" stroke="#e04c5f"/><circle cx="7.500" cy="14.500" r="4" stroke="#2f93ea"/><circle cx="16.500" cy="14.500" r="4" stroke="#2f93ea"/></g><path d="M8 23h8" stroke="#c65ba0" stroke-width="1.500"/></svg></button>
        <button class="current" title="AutoCAD"><svg viewBox="0 0 24 24"><path d="M0 0h20l3 3v15H0z" fill="#e3124b"/><path d="M2 17h22v7H2z" fill="#8a0c30"/><text x="12" y="14" class="acad">A</text><text x="13" y="22" class="tiny">CAD</text></svg></button>
        <button class="run" title="WPS"><svg viewBox="0 0 24 24"><path d="M1 4h10M3 3l5 17 5-12 3 12 6-18M14 4h6" fill="none" stroke="#e3371e" stroke-width="4"/></svg></button>
        <button class="run" title="ToDesk"><svg viewBox="0 0 24 24"><rect width="24" height="24" rx="4" fill="#fff"/><path d="M2 8h11v5h-2v7H6v-7H2z" fill="#2b7cf0"/><path d="M9 4h12v11h-5V8H9z" fill="#1bb3ee"/></svg></button>
        <button class="run" title="录制"><svg viewBox="0 0 24 24"><circle cx="12" cy="12" r="5.500" fill="#e04545"/><circle cx="12" cy="12" r="3" fill="#b92d36"/><path d="M16 9l2-1v8l-2-1z" fill="#c9545a"/></svg></button>
      </div>
      <div class="tray">
        <svg class="t1" viewBox="0 0 16 16"><path d="M2 11l6-6 6 6" fill="none" stroke="#222" stroke-width="1.300"/></svg>
        <svg class="t2"><use href="#wechat"/></svg>
        <svg class="t3"><use href="#wechat"/></svg>
        <svg class="t4" viewBox="0 0 16 16"><path d="M8 0a3 3 0 0 0-3 3v5a3 3 0 0 0 6 0V3a3 3 0 0 0-3-3zM2 7c0 8 12 8 12 0M8 13v3" fill="none" stroke="#275b9c" stroke-width="1.200"/></svg>
        <svg class="t5" viewBox="0 0 16 16"><path d="M2 15L8 2l6 13M4.500 10.500h7" fill="none" stroke="#a6a6a6" stroke-width="3"/><path d="M2 15L8 2l6 13M4.500 10.500h7" fill="none" stroke="#eee"/></svg>
        <svg class="t6" viewBox="0 0 16 16"><path d="M1 2l13-2 2 13-13 3z" fill="#3fb22c"/><path d="M12 4c-5-1-8 1-7 3s7 1 7 3-4 3-7 2" fill="none" stroke="#fff" stroke-width="2"/></svg>
        <svg class="t7" viewBox="0 0 16 16"><path d="M0 6q8-7 16 0M3 9q5-5 10 0M5.500 12q2.500-2.500 5 0" fill="none" stroke="#222" stroke-width="1.300"/><circle cx="8" cy="14" r="1.300"/></svg>
        <svg class="t8" viewBox="0 0 16 16"><path d="M0 6h3l4-4v12l-4-4H0zM9.500 5.500q2 2.500 0 5" fill="none" stroke="#222" stroke-width="1.200"/><path d="M12 4q3 4 0 8M14 2q4 6 0 12" fill="none" stroke="#b5b5b5"/></svg>
        <svg class="t9" viewBox="0 0 16 16"><path d="M3 4h11v9H1V8M15 7v3" fill="none" stroke="#222" stroke-width="1.300"/><path d="M6 6h5v5H3V9z"/><path d="M4 0L1 4h2L2 8l4-5H4z"/></svg>
        <time>2022</time>
      </div>
    </footer>
  </div>

  <div class="qr"><svg id="qr" viewBox="0 0 37 37"></svg></div>

  <script src="script.js"></script>
</body>
</html>
```

FILE: styles.css
```css
* {
  box-sizing: border-box;
}

body {
  margin: 0;
  background: #000;
  font-family: "Noto Sans", "Noto Sans CJK SC", sans-serif;
  font-size: 12px;
  color: #d8dbdf;
}

button,
input,
select {
  font: inherit;
  color: inherit;
}

button {
  padding: 0;
  border: 0;
  background: none;
  display: flex;
  align-items: center;
  justify-content: center;
}

a {
  color: inherit;
  text-decoration: none;
}

svg {
  display: block;
}

button svg {
  width: 16px;
  height: 16px;
  flex: none;
}

.sprite {
  position: absolute;
}

/* icon paints */
.w { fill: #dcdcdc; }
.b { fill: #8ac8f5; }
.lw { fill: none; stroke: #dcdcdc; }
.lb { fill: none; stroke: #74b3de; }

.tiny {
  font: bold 6px "Liberation Sans", sans-serif;
  text-anchor: middle;
  fill: #fff;
}
.abc { fill: #74b3de; }

.window {
  margin: 0 5%;
  height: 100vh;
  display: flex;
  flex-direction: column;
  background: #3c4552;
}

.caret {
  width: 0;
  height: 0;
  border: 3px solid transparent;
  border-top: 4px solid #dcdcdc;
  border-bottom: 0;
  flex: none;
}
.dim { opacity: 0.45; }

/* ---- title bar ---- */
.titlebar {
  height: 21px;
  flex: none;
  display: flex;
  align-items: center;
  background: #222933;
}

.logo {
  display: flex;
  height: 18px;
  align-self: flex-start;
  color: #fff;
  font-family: "Liberation Sans", sans-serif;
  font-weight: bold;
}
.logo b {
  width: 18px;
  background: #d9124a;
  text-align: center;
  font-size: 14px;
  line-height: 18px;
}
.logo i {
  width: 20px;
  background: #8a0c30;
  text-align: center;
  font-size: 7px;
  line-height: 18px;
  font-style: normal;
}

.quick {
  display: flex;
  align-items: center;
  margin-left: 9px;
}
.quick button { width: 24px; }
.quick .caret { margin: 0 3px 0 4px; }

.workspace {
  width: 179px;
  height: 21px;
  padding: 0 1px 0 2px;
  background: #3f4856;
  justify-content: flex-start;
  gap: 3px;
  color: #a9aeb5;
}
.workspace .caret {
  margin-left: auto;
  border-width: 4px 3px 0;
}

.lined {
  margin: 0 13px 0 7px;
  position: relative;
}
.lined::before {
  content: "";
  position: absolute;
  left: -4px;
  top: -7px;
  width: 8px;
  height: 1px;
  background: #dcdcdc;
}

.share {
  display: flex;
  align-items: center;
  gap: 3px;
  color: #9ccdf3;
}
.share svg {
  width: 16px;
  height: 14px;
}

h1 {
  margin: 0 0 0 118px;
  font-size: 13px;
  line-height: 20px;
  font-weight: normal;
  white-space: nowrap;
}
h1 span { margin-left: 6px; }

.account {
  display: flex;
  align-items: center;
  margin-left: auto;
}
.play {
  border: 4px solid transparent;
  border-left: 5px solid #dcdcdc;
  border-right: 0;
  margin-right: 7px;
}
.account input {
  width: 180px;
  height: 21px;
  padding: 0 3px;
  border: 0;
  background: #465160;
  font-size: 11px;
  font-style: italic;
}
.account input::placeholder { color: #a5adb8; }
.account button { width: 24px; }
.account .login {
  width: 119px;
  justify-content: flex-start;
  padding-left: 5px;
  gap: 4px;
}
.login .caret { margin-left: auto; }
.account .cart { width: 32px; }
.account .adsk,
.account .helpbtn {
  width: 40px;
  gap: 6px;
}
.account .helpbtn {
  width: 48px;
  border-left: 1px solid #4a5361;
}

.winbtns {
  display: flex;
  margin-left: 54px;
}
.winbtns button { width: 24px; }
.menubar .winbtns { margin-left: auto; }
.small button { width: 17px; }

/* ---- menu ---- */
.menubar {
  height: 23px;
  flex: none;
  display: flex;
  align-items: center;
  gap: 19px;
  padding: 0 0 0 9px;
  background: #222933;
  border-bottom: 1px solid #3c4552;
  font-size: 13px;
  color: #b4b8be;
}

/* ---- tabs ---- */
.filetabs {
  height: 26px;
  flex: none;
  display: flex;
  align-items: flex-end;
  padding-left: 8px;
  background: #222933;
}
.filetabs .tab {
  height: 24px;
  padding: 0 8px 0 10px;
}
.filetabs .active {
  width: 288px;
  padding: 0 10px 0 17px;
  background: #3c4552;
  clip-path: polygon(12px 0, 100% 0, calc(100% - 9px) 100%, 0 100%);
  font-weight: bold;
  color: #f0f2f4;
  white-space: nowrap;
  justify-content: flex-start;
}
.active svg {
  width: 12px;
  height: 12px;
  margin-left: auto;
}
.filetabs .second { padding: 0 24px 0 7px; }
.slash {
  width: 6px;
  height: 14px;
  align-self: center;
  background: linear-gradient(to bottom right, transparent 46%, #59616d 46%, #59616d 54%, transparent 54%);
}
.add {
  width: 33px;
  height: 24px;
}
.add svg {
  width: 12px;
  height: 12px;
}

/* ---- toolbars ---- */
.toolrow {
  height: 24px;
  flex: none;
  display: flex;
  gap: 2px;
  margin-top: 4px;
}
.second.toolrow {
  margin-top: 3px;
  margin-bottom: 4px;
}

.panel {
  display: flex;
  align-items: center;
  border: 1px solid #272e39;
  background: #3c4552;
  padding-left: 3px;
}
.panel > button {
  flex: 1;
  height: 22px;
}
.panel .caret { margin: 0 3px; }

.grip {
  width: 3px;
  height: 15px;
  flex: none;
  background: repeating-linear-gradient(#9aa0a9 0 1px, transparent 1px 2px);
}
.sep {
  width: 1px;
  height: 18px;
  margin: 0 1px 0 2px;
  background: #272e39;
}

.standard { width: 649px; }
.layers2 { width: 248px; }
.styles { width: 600px; }
.ws { width: 232px; }
.layer { width: 407px; }
.props { width: 583px; }
.standard .grip { margin-right: 1px; }

.combo {
  position: relative;
  width: 122px;
  height: 21px;
  flex: none;
  background: #fff;
}
.combo select {
  width: 100%;
  height: 100%;
  padding: 0 16px 0 6px;
  border: 0;
  background: none;
  appearance: none;
  color: #6a6e73;
}
.combo .inset { padding-left: 19px; }
.combo::after {
  content: "";
  position: absolute;
  right: 6px;
  top: 6px;
  width: 5px;
  height: 5px;
  border: solid #a9adb2;
  border-width: 0 1px 1px 0;
  transform: rotate(45deg);
}
.ws .combo {
  width: 178px;
  margin-left: 1px;
}
.layer .combo { width: 303px; }
.layer select { padding-left: 100px; }
.layerstate {
  position: absolute;
  left: 5px;
  top: 2px;
  pointer-events: none;
}

.props { gap: 3px; }
.props .color { width: 152px; }
.props .ltype { width: 162px; }
.props .lweight { width: 127px; }
.color select { padding-left: 21px; }
.ltype select { padding-left: 71px; }
.lweight select { padding-left: 46px; }
.plot select { padding-left: 10px; }
.swatch {
  position: absolute;
  left: 3px;
  top: 4px;
  width: 14px;
  height: 13px;
  border: 1px solid #555;
}
.sample {
  position: absolute;
  left: 6px;
  top: 10px;
  width: 60px;
  height: 1px;
  background: #999;
}
.lweight .sample {
  width: 35px;
  background: #000;
}

/* ---- work area ---- */
.work {
  flex: 1;
  min-height: 0;
  display: grid;
  grid-template-columns: 28px 1fr 17px 30px;
  grid-template-rows: 1fr 18px;
  padding-bottom: 4px;
}
.side { grid-row: 1 / 3; }
.right { padding-left: 3px; }

.palette {
  width: 25px;
  display: flex;
  flex-direction: column;
  align-items: center;
  padding-top: 3px;
  border: 1px solid #272e39;
}
.palette .grip {
  width: 14px;
  height: 4px;
  margin-bottom: 1px;
  background: repeating-linear-gradient(90deg, #9aa0a9 0 1px, transparent 1px 2px);
}
.palette button { flex: 1; }
.draw {
  height: 454px;
  padding-right: 2px;
}
.modify { height: 410px; }
.order {
  height: 147px;
  margin-top: 1px;
}
.right .palette { width: 26px; }
.rule {
  width: 21px;
  height: 1px;
  margin: 1px 0;
  background: #c3c6ca;
}

.viewport {
  position: relative;
  overflow: hidden;
  background: #212830;
}
.drawing {
  width: 100%;
  height: 100%;
  overflow: hidden;
}
.depth text {
  font: 18px "Liberation Serif", serif;
  text-anchor: middle;
  fill: #fff;
  stroke: #fff;
  stroke-width: 0.4px;
}
.dimtext {
  font: 20px "Liberation Sans", sans-serif;
  text-anchor: middle;
  fill: #fff;
}
.ucs {
  font: 300 19px "Open Sans", sans-serif;
  text-anchor: middle;
  fill: #d5dadc;
}

.viewlabel {
  position: absolute;
  left: 2px;
  top: 3px;
  line-height: 18px;
}

.dyn {
  position: absolute;
  height: 21px;
  line-height: 18px;
  padding: 0 3px;
  border: 1px solid #000;
  background: #9b9b9b;
  color: #1a1a1a;
  white-space: nowrap;
}
.length {
  left: 866px;
  top: 426px;
  width: 62px;
  background: #fff;
  outline: none;
}
.length::selection {
  background: #1177d7;
  color: #fff;
}
.angle {
  left: 1196px;
  top: 500px;
  width: 35px;
}
.tip {
  left: 935px;
  top: 642px;
  width: 136px;
}

.viewcube {
  position: absolute;
  right: 23px;
  top: 22px;
  width: 122px;
  height: 122px;
  border: 15px solid rgba(100, 112, 112, 0.45);
  border-radius: 50%;
  font-size: 18px;
  line-height: 20px;
  color: #b4b8ba;
}
.viewcube > * { position: absolute; }
.viewcube .n { left: 37px; top: -21px; }
.viewcube .s { left: 37px; top: 94px; }
.viewcube .west { left: -20px; top: 37px; }
.viewcube .e { left: 94px; top: 37px; }
.top {
  left: 20px;
  top: 20px;
  width: 52px;
  height: 52px;
  background: #b2b5b6;
}
.top span {
  width: 32px;
  line-height: 32px;
  background: #a3a7ab;
  font-size: 30px;
  color: #50565b;
}
.wcs {
  left: 23px;
  top: 134px;
  width: 47px;
  height: 17px;
  padding-right: 14px;
  border-radius: 3px;
  background: #8e909d;
  font: 11px "Liberation Sans", sans-serif;
  color: #5d606b;
}

.vscroll {
  position: relative;
  background: #f1f1f1;
}
.vscroll i {
  position: absolute;
  left: 5px;
  bottom: 71px;
  width: 8px;
  height: 17px;
  background: #858585;
}
.hscroll {
  grid-column: 2 / 4;
  grid-row: 2;
  position: relative;
  border-top: 1px solid #59616d;
  background: #f1f1f1;
}
.hscroll i {
  position: absolute;
  right: 243px;
  top: 5px;
  width: 18px;
  height: 8px;
  background: #858585;
}

/* ---- command line ---- */
.command {
  display: flex;
  flex: none;
  height: 58px;
  margin-bottom: 5px;
  background: #2b323e;
  border-top: 1px solid #1c222b;
}
.cmdside {
  width: 24px;
  display: flex;
  flex-direction: column;
  align-items: center;
  padding: 4px 2px 0 0;
}
.cmdside .grip {
  width: 18px;
  height: 2px;
  margin-bottom: 5px;
  background: repeating-linear-gradient(90deg, #9aa0a9 0 1px, transparent 1px 3px);
}
.cmdside button { height: 24px; }
.cmdbody {
  flex: 1;
  font-family: "DejaVu Sans Mono", "Noto Sans CJK SC", monospace;
  font-size: 13px;
  color: #111;
}
.history {
  height: 36px;
  padding: 3px;
  background: #c8c8c8;
}
.history p {
  margin: 0;
  line-height: 15px;
}
.prompt {
  position: relative;
  height: 20px;
  margin-top: 1px;
  padding-left: 5px;
  display: flex;
  align-items: center;
  background: #fff;
  white-space: pre;
}
.cmdicon {
  width: 14px;
  height: 14px;
  opacity: 0.6;
}
.caret.dark {
  margin: 0 7px 0 5px;
  border-top-color: #444;
}
.prompt b {
  font-size: 12px;
  margin-right: 6px;
}
.prompt button {
  height: 18px;
  margin-left: 1px;
  border-radius: 3px;
  background: #d3d3d3;
}
.prompt em {
  font-style: normal;
  color: #1c1cc4;
}
.cmdthumb {
  position: absolute;
  right: 1px;
  top: 1px;
  width: 8px;
  height: 24px;
  border-radius: 4px 4px 0 0;
  background: #666;
}

/* ---- layout tabs ---- */
.layouts {
  height: 30px;
  flex: none;
  display: flex;
  align-items: flex-start;
  padding-left: 8px;
  background: #222933;
}
.layouts .tab {
  height: 24px;
  padding: 0 8px;
}
.layouts .active {
  width: 58px;
  background: #3c4552;
  clip-path: polygon(10px 0, 100% 0, calc(100% - 10px) 100%, 0 100%);
  font-weight: bold;
}
.layouts .slash {
  margin-top: 5px;
  align-self: flex-start;
}

/* ---- status bar ---- */
.status {
  height: 26px;
  flex: none;
  display: flex;
  gap: 4px;
  padding-right: 84px;
  background: #2a313c;
  border-bottom: 1px solid #8d9299;
}
.blank {
  flex: 1;
  background: #3c4552;
}
.group {
  display: flex;
  align-items: center;
  background: #3c4552;
}
.group button {
  width: 24px;
  height: 24px;
  border-left: 1px solid #3c4552;
}
.group .on { background: #5b8bbf; }
.group .caret {
  margin: 0 4px 0 5px;
  border-width: 5px 4px 0;
}
.group .ratio { width: 19px; }
.model button {
  width: 32px;
  font-weight: bold;
}
.status .tight { margin: 0 -2px; }
.hw { width: 24px; }
.hw svg {
  width: 24px;
  height: 24px;
}

/* ---- taskbar ---- */
.taskbar {
  height: 48px;
  flex: none;
  display: flex;
  background: #f3f3f3;
  color: #222;
}
.apps {
  width: 580px;
  margin-left: 11px;
  display: flex;
}
.apps button {
  position: relative;
  flex: 1;
}
.apps svg {
  width: 24px;
  height: 24px;
}
.apps .current::before {
  content: "";
  position: absolute;
  inset: 6px 4px;
  border-radius: 4px;
  background: #fff;
}
.current svg { position: relative; }
.apps .run::after,
.apps .current::after {
  content: "";
  position: absolute;
  bottom: 5px;
  width: 6px;
  height: 3px;
  border-radius: 2px;
  background: #8a8a8a;
}
.apps .current::after {
  width: 16px;
  background: #1071bd;
}
.ps {
  font: bold 12px "Open Sans", sans-serif;
  text-anchor: middle;
  fill: #36a5f5;
}
.acad {
  font: bold 14px "Liberation Sans", sans-serif;
  text-anchor: middle;
  fill: #fff;
}

.tray {
  display: flex;
  align-items: center;
  margin-left: auto;
  padding-right: 75px;
}
.tray svg {
  width: 16px;
  height: 16px;
  margin-right: 8px;
}
.tray .t1 { margin-right: 16px; }
.tray .t2 { margin-right: 16px; }
.tray .t3 { margin-right: 18px; }
.tray .t4 { margin-right: 17px; }
.tray .t5 { margin-right: 22px; }
.tray .t6 { margin-right: 23px; }
.tray .t7 { margin-right: 6px; }
.tray .t8 { margin-right: 9px; }
.tray time { padding: 16px 0 0 8px; }

.qr {
  position: absolute;
  right: calc(5% - 5px);
  bottom: 0;
  width: 97px;
  padding: 6px;
  background: #fff;
}
```

FILE: script.js
```js
// small repeatable random source so the hatch looks the same every time
let seed = 7;
function rnd() {
  seed = (seed * 16807) % 2147483647;
  return seed / 2147483647;
}

// aggregate triangles in the two concrete layers
let d = '';
for (let i = 0; i < 44; i++) {
  const x = 128 + rnd() * 248;
  const y = 265 + rnd() * 232;
  const s = 3 + rnd() * 3;
  if (rnd() > 0.5) {
    d += `M${x} ${y}l${s} ${s}h${-s - 1}z`;
  } else {
    d += `M${x} ${y}l${s} -1l-1 ${s}z`;
  }
}
for (let i = 0; i < 40; i++) {
  d += `M${126 + rnd() * 256} ${264 + rnd() * 238}h1`;
}
document.getElementById('aggregate').setAttribute('d', d);

// qr modules
const N = 37;
const qr = document.getElementById('qr');
function finder(x, y) {
  return `M${x} ${y}h7v7h-7zM${x + 1} ${y + 1}v5h5v-5zM${x + 2} ${y + 2}h3v3h-3z`;
}
let m = finder(0, 0) + finder(N - 7, 0) + finder(0, N - 7);
for (let y = 0; y < N; y++) {
  for (let x = 0; x < N; x++) {
    const corner = (x < 8 && y < 8) || (x > N - 9 && y < 8) || (x < 8 && y > N - 9);
    const logo = x > 13 && x < 23 && y > 13 && y < 23;
    const align = x > 27 && x < 33 && y > 27 && y < 33;
    if (!corner && !logo && !align && rnd() < 0.52) m += `M${x} ${y}h1v1h-1z`;
  }
}
m += 'M28 28h5v5h-5zM29 29v3h3v-3zM30 30h1v1h-1z';
qr.innerHTML = `<path d="${m}" fill-rule="evenodd"/>
  <path d="M14 15h9v8h-9z" fill="#dbe9ee"/><path d="M14.500 16h4v3h-4z" fill="#4b9bc4"/>
  <path d="M19 19h3.500v3h-3.500z" fill="#e0bd4d"/><path d="M15 20h3v2h-3z" fill="#2f74ad"/>`;

document.querySelector('.length').select();
```
